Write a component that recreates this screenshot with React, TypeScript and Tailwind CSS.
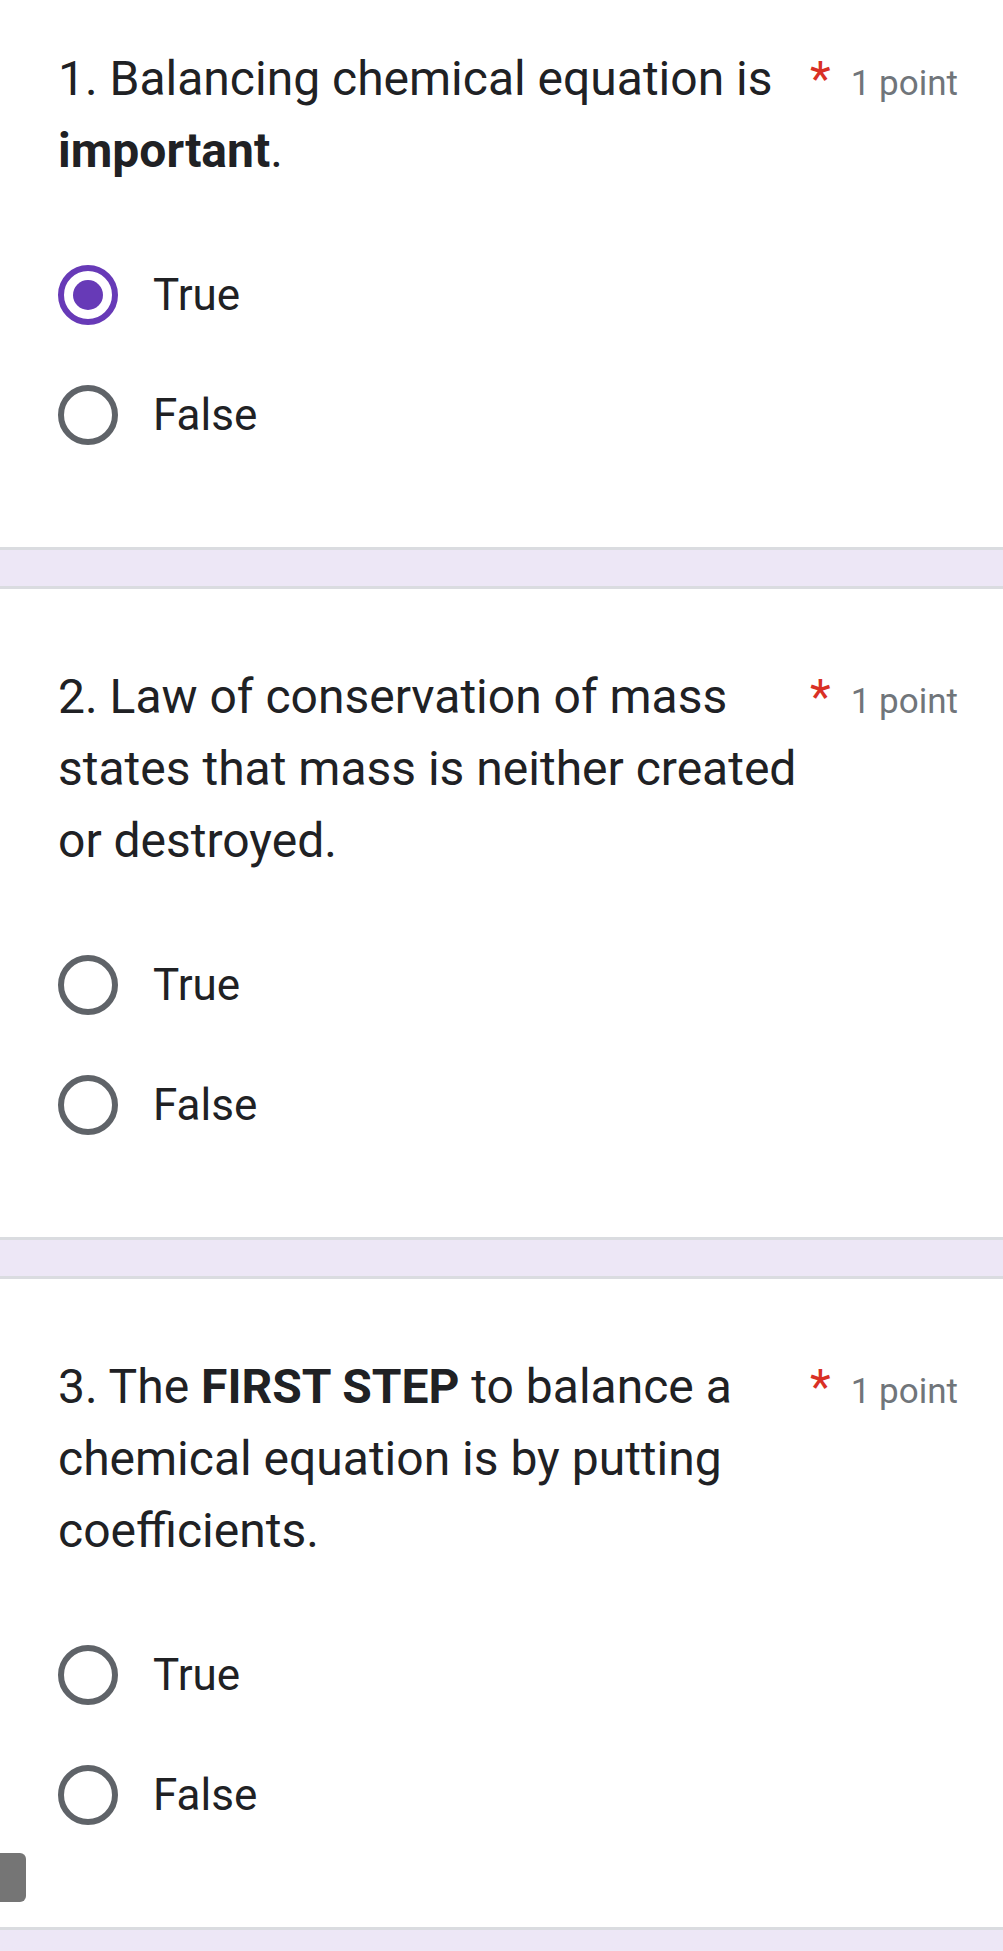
import React from "react";

type Question = {
  id: number;
  title: React.ReactNode;
  selected?: string;
};

const QUESTIONS: Question[] = [
  {
    id: 1,
    title: (
      <>
        1. Balancing chemical equation is <b className="font-bold">important</b>.
      </>
    ),
    selected: "True",
  },
  {
    id: 2,
    title: <>2. Law of conservation of mass states that mass is neither created or destroyed.</>,
  },
  {
    id: 3,
    title: (
      <>
        3. The <b className="font-bold">FIRST STEP</b> to balance a chemical equation is by putting coefficients.
      </>
    ),
  },
];

function Radio({ checked }: { checked: boolean }) {
  if (checked) {
    return (
      <div className="w-[60px] h-[60px] rounded-full border-[6px] border-[#673ab7] flex items-center justify-center flex-shrink-0">
        <div className="w-[30px] h-[30px] rounded-full bg-[#673ab7]" />
      </div>
    );
  }
  return <div className="w-[60px] h-[60px] rounded-full border-[6px] border-[#5f6368] flex-shrink-0" />;
}

function QuestionCard({ q, first }: { q: Question; first?: boolean }) {
  return (
    <div
      className={`bg-white border-[#dadce0] border-b-[3px] pl-[58px] pb-[72px] ${
        first ? "pt-[43px]" : "border-t-[3px] pt-[72px]"
      }`}
    >
      {/* Title row */}
      <div className="flex items-baseline">
        <div className="w-[746px] flex-shrink-0 text-[48px] leading-[72px] text-[#202124]">{q.title}</div>
        <span className="ml-[6px] flex-shrink-0 text-[48px] leading-[72px] text-[#d93025]">*</span>
        <span className="ml-[20px] flex-shrink-0 text-[35px] text-[#70757a] whitespace-nowrap">1 point</span>
      </div>

      {/* Options */}
      <div className="mt-[48px] flex flex-col">
        {["True", "False"].map(opt => (
          <div key={opt} className="h-[120px] flex items-center">
            <Radio checked={q.selected === opt} />
            <span className="ml-[35px] text-[44px] text-[#202124]">{opt}</span>
          </div>
        ))}
      </div>
    </div>
  );
}

export default function App() {
  return (
    <div className="relative w-[1003px] h-[1951px] overflow-hidden bg-[#ede7f6] font-['Roboto',sans-serif]">
      <QuestionCard q={QUESTIONS[0]} first />
      <div className="h-[36px]" />
      <QuestionCard q={QUESTIONS[1]} />
      <div className="h-[36px]" />
      <QuestionCard q={QUESTIONS[2]} />

      {/* floating handle */}
      <div className="absolute left-0 top-[1853px] w-[26px] h-[49px] rounded-r-[6px] bg-[#757575]" />
    </div>
  );
}
